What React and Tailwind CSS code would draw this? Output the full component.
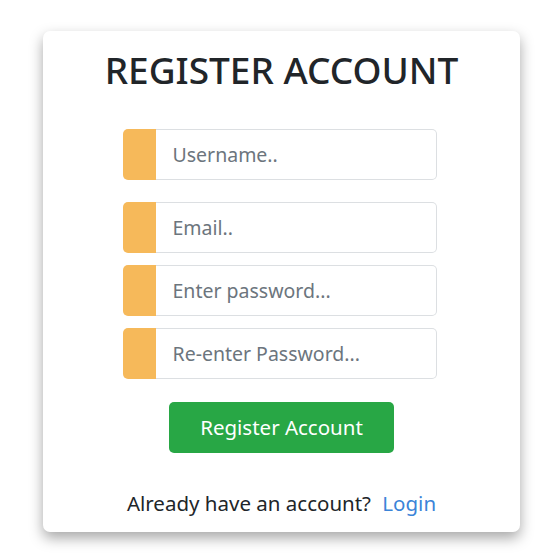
import React from "react";

function Field({ placeholder, type = "text", className = "" }) {
  return (
    <div className={`flex w-[314px] h-[51px] ${className}`}>
      <div className="w-[33px] h-full bg-[#f6b95a] rounded-l-[5px] shrink-0" />
      <input
        type={type}
        placeholder={placeholder}
        className="w-0 min-w-0 flex-1 h-full border border-[#dcdfe2] border-l-0 rounded-r-[5px] pl-[17px] text-[19.5px] text-[#495057] placeholder:text-[#6c757d] outline-none bg-white"
        style={{ fontFamily: '"Noto Sans", "Open Sans", sans-serif' }}
      />
    </div>
  );
}

export default function App() {
  return (
    <div className="w-[556px] h-[556px] bg-white overflow-hidden" style={{ fontFamily: '"Noto Sans", "Open Sans", sans-serif' }}>
      <div className="ml-[43px] mt-[31px] w-[477px] h-[501px] bg-white rounded-[7px] shadow-[0_6px_14px_rgba(0,0,0,0.35)] flex flex-col items-center">
        <h1 className="mt-[15px] text-[37px] leading-[48px] font-medium text-[#212529]">REGISTER ACCOUNT</h1>
        <div className="mt-[35px] mr-[4px] flex flex-col items-center">
          <Field placeholder="Username.." className="mb-[22px]" />
          <Field placeholder="Email.." className="mb-[12px]" />
          <Field placeholder="Enter password..." type="password" className="mb-[12px]" />
          <Field placeholder="Re-enter Password..." type="password" />
        </div>
        <button className="mt-[23px] w-[225px] h-[51px] bg-[#28a745] text-white text-[20.5px] rounded-[5px]">
          Register Account
        </button>
        <p className="mt-[35px] text-[20.5px] text-[#212529]">
          Already have an account?{" "}<span className="ml-[6px] text-[#3b84d8]">Login</span>
        </p>
      </div>
    </div>
  );
}
